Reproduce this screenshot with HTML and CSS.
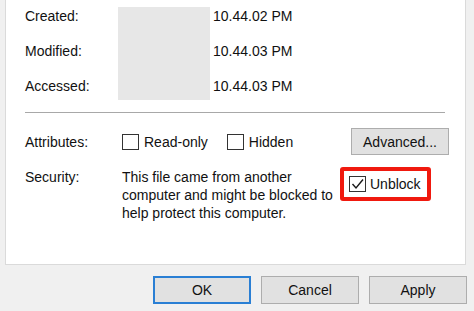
FILE: index.html
```html
<!DOCTYPE html>
<html>
<head>
<meta charset="utf-8">
<link rel="stylesheet" href="styles.css">
</head>
<body>
<div class="panel">
  <div class="times">
    <div class="lbl r1">Created:</div>
    <div class="blank"></div>
    <div class="val r1">10.44.02 PM</div>
    <div class="lbl r2">Modified:</div>
    <div class="val r2">10.44.03 PM</div>
    <div class="lbl r3">Accessed:</div>
    <div class="val r3">10.44.03 PM</div>
  </div>
  <div class="sep"></div>
  <div class="attr-row">
    <div class="row-label">Attributes:</div>
    <label class="check"><span class="box"></span><span>Read-only</span></label>
    <label class="check hidden-check"><span class="box"></span><span>Hidden</span></label>
    <button class="btn adv">Advanced...</button>
  </div>
  <div class="sec-row">
    <div class="row-label">Security:</div>
    <div class="sec-text">This file came from another<br>computer and might be blocked to<br>help protect this computer.</div>
    <div class="unblock">
      <span class="box checked"><svg width="15" height="14" viewBox="0 0 15 14"><polyline points="2.5,7 6,11 13,2.5" fill="none" stroke="#1a1a1a" stroke-width="1.4"/></svg></span>
      <span>Unblock</span>
    </div>
  </div>
</div>
<div class="buttons">
  <button class="btn ok">OK</button>
  <button class="btn">Cancel</button>
  <button class="btn">Apply</button>
</div>
</body>
</html>
```
FILE: styles.css
```css
html, body {
  margin: 0;
  padding: 0;
}
body {
  width: 474px;
  height: 311px;
  overflow: hidden;
  background: #f0f0f0;
  font-family: "Liberation Sans", Arial, sans-serif;
  font-size: 14px;
  color: #111;
}
.panel {
  margin-left: 5px;
  width: 459px;
  height: 264px;
  background: #fff;
  border: 1px solid #dadada;
  border-top: none;
  padding: 0 16px 0 19px;
  box-sizing: content-box;
  width: 424px;
}
.times {
  display: grid;
  grid-template-columns: 90px 92px 1fr;
  grid-template-rows: 35px 35px 35px;
  column-gap: 3px;
  padding-top: 7px;
  line-height: 16px;
}
.lbl { grid-column: 1; padding-top: 1px; }
.val { grid-column: 3; padding-top: 1px; }
.r1 { grid-row: 1; }
.r2 { grid-row: 2; }
.r3 { grid-row: 3; }
.blank {
  grid-column: 2;
  grid-row: 1 / 4;
  height: 93px;
  background: #e7e7e7;
}
.sep {
  width: 420px;
  height: 1px;
  background: #a8a8a8;
}
.attr-row {
  margin-top: 15px;
  height: 27px;
  display: flex;
  align-items: center;
}
.row-label {
  width: 97px;
  flex: none;
}
.check {
  display: flex;
  align-items: center;
  gap: 5px;
}
.hidden-check {
  margin-left: 19px;
}
.box {
  width: 17px;
  height: 16px;
  box-sizing: border-box;
  border: 1px solid #333;
  background: #fff;
  display: flex;
  align-items: center;
  justify-content: center;
  flex: none;
}
.btn {
  width: 98px;
  height: 28px;
  box-sizing: border-box;
  background: #e1e1e1;
  border: 1px solid #adadad;
  font-family: "Liberation Sans", Arial, sans-serif;
  font-size: 14px;
  color: #111;
  padding: 0;
  margin: 0;
}
.adv {
  margin-left: auto;
  height: 27px;
}
.sec-row {
  margin-top: 13px;
  display: flex;
  align-items: flex-start;
  line-height: 18px;
}
.sec-text {
  width: 215px;
  white-space: nowrap;
}
.unblock {
  margin-left: 3px;
  margin-top: -1px;
  border: 4px solid #f0190e;
  border-radius: 3px;
  height: 26px;
  padding: 0 6px 0 5px;
  display: flex;
  align-items: center;
  gap: 4px;
}
.buttons {
  margin-top: 11px;
  display: flex;
  justify-content: flex-end;
  gap: 10px;
  padding-right: 7px;
}
.ok {
  border: 2px solid #2a7fd4;
}
```
